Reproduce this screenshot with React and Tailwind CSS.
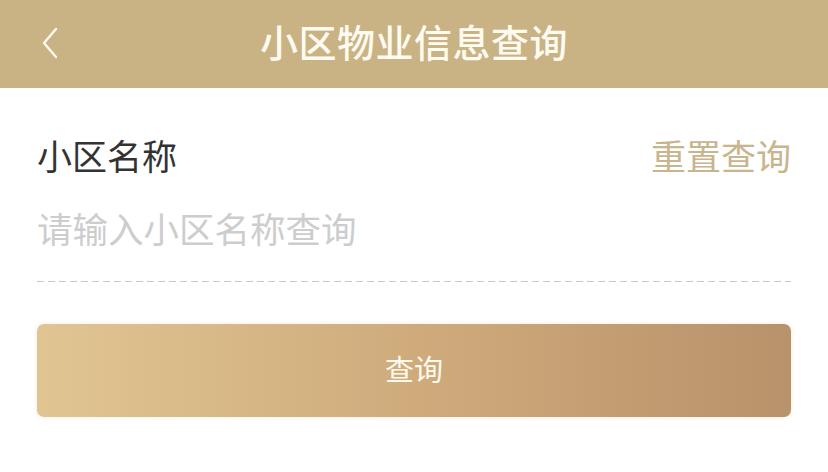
import { useState } from 'react';

export default function App() {
  const [keyword, setKeyword] = useState('');

  return (
    <div className="w-[828px] h-[472px] bg-white overflow-hidden font-['Noto_Sans_CJK_SC','Noto_Sans',sans-serif]">
      {/* top bar */}
      <div className="relative h-[88px] bg-[#c9b284] flex items-center justify-center">
        <button className="absolute left-[38px] top-[27px] w-[24px] h-[32px] flex items-center justify-center">
          <svg width="20" height="32" viewBox="0 0 20 32" fill="none">
            <path d="M16 2 L4 16 L16 30" stroke="#fffaf0" strokeWidth="2.4" strokeLinecap="round" strokeLinejoin="round" />
          </svg>
        </button>
        <h1 className="text-[38px] leading-none font-medium text-[#fffbf0] tracking-[0.5px] -mt-[7px]">小区物业信息查询</h1>
      </div>

      <div className="px-[37px]">
        <div className="mt-[46px] h-[40px] flex items-center justify-between">
          <span className="text-[35px] leading-none text-[#333333]">小区名称</span>
          <button onClick={() => setKeyword('')} className="text-[35px] leading-none text-[#c8b58e]">重置查询</button>
        </div>

        <input
          value={keyword}
          onChange={(e) => setKeyword(e.target.value)}
          placeholder="请输入小区名称查询"
          className="mt-[31px] w-full h-[44px] text-[35.5px] leading-none text-[#333] placeholder:text-[#cdcdcd] outline-none bg-transparent"
        />

        <div className="mt-[32px] h-[1px] bg-[linear-gradient(to_right,#c8c8c8_60%,transparent_0)] bg-[length:11px_1px]" />

        <button className="mt-[42px] w-full h-[93px] rounded-[7px] bg-[linear-gradient(to_right,#e0c592,#cfab7c_50%,#b8926a)] shadow-[0_0_4px_rgba(220,190,150,0.35)] flex items-center justify-center">
          <span className="text-[29px] leading-none text-[#fffaf0] -mt-[4px]">查询</span>
        </button>
      </div>
    </div>
  );
}
